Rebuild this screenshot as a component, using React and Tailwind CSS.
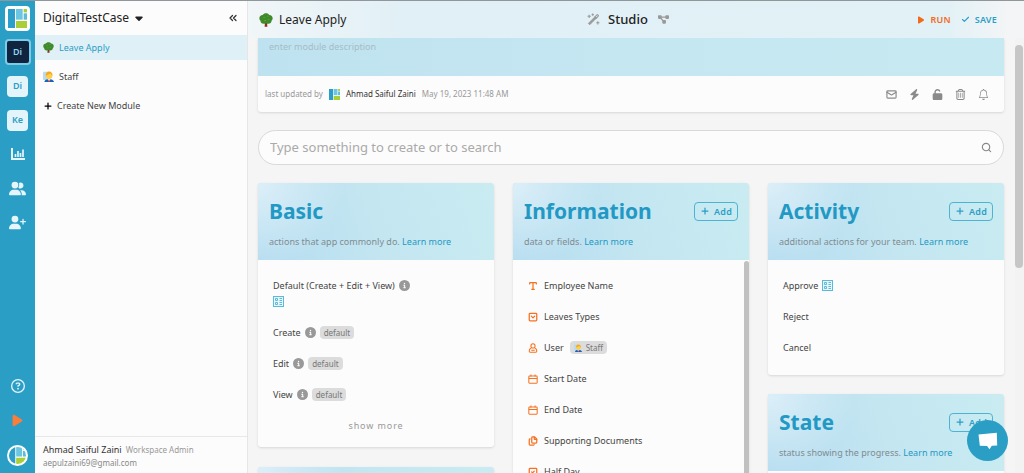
import React, { useState } from "react";
import {
  Calendar,
  Check,
  ChevronsLeft,
  Files,
  Mail,
  Plus,
  Search,
  SquareCheck,
  SquareChevronDown,
  Type,
} from "lucide-react";
import { BsBell } from "react-icons/bs";
import {
  FaBolt,
  FaCaretDown,
  FaCircleInfo,
  FaDiagramProject,
  FaPlay,
  FaRegCircleQuestion,
  FaRegTrashCan,
  FaUnlock,
  FaUserGroup,
  FaUserPlus,
} from "react-icons/fa6";

/* -------------------- Drawings -------------------- */
function Logo({ className }) {
  return (
    <svg viewBox="0 0 57 57" className={className} aria-hidden="true">
      <rect width="57" height="57" fill="#fff" />
      <rect width="21" height="57" fill="#2b9ec9" />
      <rect x="24" width="20" height="32" fill="#6cc6e2" />
      <rect x="47" width="10" height="10" fill="#a9ce37" />
      <rect x="47" y="13" width="10" height="19" fill="#5bbdd6" />
      <rect x="24" y="36" width="33" height="21" fill="#a9ce37" />
    </svg>
  );
}

function TreeIcon({ className }) {
  return (
    <svg viewBox="0 0 16 16" className={className} aria-hidden="true">
      <path d="M7 9h2l.6 6.6H6.4z" fill="#8b2f1c" />
      <path
        d="M8 .4c1.6 0 3 .8 3.800 1.900 2.300.3 3.800 1.700 3.800 3.700 0 1.300-.5 2.200-1.300 2.900.1 2.100-1.500 3.500-3.600 3.500-1 0-1.900-.3-2.700-.8-.8.5-1.700.8-2.700.8-2.100 0-3.700-1.400-3.600-3.500C.9 8.200.4 7.300.4 6c0-2 1.500-3.400 3.800-3.700C5 1.200 6.400.4 8 .4z"
        fill="#3f8a2b"
      />
      <path d="M5 4.500h2v1H5zM9 3h2v1H9zM10 7h2v1h-2zM6 8h2v1H6z" fill="#5fa63d" />
    </svg>
  );
}

function StaffIcon({ className }) {
  return (
    <svg viewBox="0 0 16 16" className={className} aria-hidden="true">
      <rect x="0" y="1" width="9" height="12" rx="1" fill="#b9dcec" />
      <path d="M2 16c.3-3 2.600-4.500 6.500-4.500S15.500 13 16 16z" fill="#1565c0" />
      <path d="M6.500 11.500h4.500l-2.200 3.800z" fill="#fff" />
      <path d="M8.200 12.500h1l.5 3.500h-2z" fill="#e53935" />
      <circle cx="8.800" cy="6.800" r="4.800" fill="#ffcf4a" />
      <path d="M4 7.500C3.600 3 6 .8 9 .8s5.200 2.400 4.700 6.500C12.800 6.500 11.800 5 11 3.800 9 5 6 5 4 7.500z" fill="#f6a623" />
    </svg>
  );
}

function FormIcon() {
  return (
    <svg viewBox="0 0 11 11" className="h-[11px] w-[11px]" fill="none" stroke="#5cb9d9" aria-label="form">
      <rect x=".5" y=".5" width="10" height="10" fill="#e6f5fa" />
      <path d="M2.500 2.500h2v2h-2zM2.500 6.500h2v2h-2zM6.500 2.500H9M6.500 4.500H9M6.500 6.500H9M6.500 8.500H9" />
    </svg>
  );
}

function ChartIcon() {
  return (
    <svg viewBox="0 0 14 12" className="h-3 w-[14px]" fill="none" stroke="currentColor" aria-hidden="true">
      <path d="M1 0v11h13" strokeWidth="2" />
      <path d="M4.500 9V6M7 9V3M9.500 9V5M12 9V1.500" strokeWidth="1.700" />
    </svg>
  );
}

function WandIcon({ className }) {
  return (
    <svg viewBox="0 0 24 24" className={className} fill="none" stroke="currentColor" aria-hidden="true">
      <path d="M2.500 19.200 14.700 7l2.500 2.500L5 21.700z" fill="currentColor" strokeWidth="1.500" strokeLinejoin="round" />
      <path d="m14.700 7 3.600-3.600c.5-.5 1.200-.5 1.700 0l.8.800c.5.5.5 1.200 0 1.700l-3.600 3.600z" strokeWidth="2" />
      <path d="M4 3v6M1 6h6M20 15v6M17 18h6M10.500 1v4M8.500 3h4" strokeWidth="2" />
    </svg>
  );
}

function UserIcon({ className }) {
  return (
    <svg viewBox="0 0 24 24" className={className} fill="none" stroke="currentColor" strokeWidth="2.500" aria-hidden="true">
      <circle cx="12" cy="7" r="5" />
      <path d="M7.500 12.500C4.500 13.500 3 15.500 3 18.500V20c0 1 .8 2 2 2h14c1.200 0 2-1 2-2v-1.500c0-3-1.500-5-4.500-6" />
      <path d="M8 17.500h8" />
    </svg>
  );
}

function CalendarIcon({ className }) {
  return (
    <svg viewBox="0 0 24 24" className={className} fill="none" stroke="currentColor" strokeWidth="2.500" aria-hidden="true">
      <rect x="2" y="5" width="20" height="17" rx="1.500" />
      <path d="M2 11h20M7 1v5M17 1v5" />
    </svg>
  );
}

function ChatIcon() {
  return (
    <svg viewBox="0 0 20 18" className="h-[18px] w-5" fill="#fff" aria-hidden="true">
      <path d="M.5 2.500 18.800.8l.4 12.700-5.400.3-2.300 3.400-2.400-3.200-7.300-.3z" />
    </svg>
  );
}

/* -------------------- Data -------------------- */
const workspaces = [
  { id: 1, label: "Di", active: true },
  { id: 2, label: "Di" },
  { id: 3, label: "Ke" },
];

const basics = ["Create", "Edit", "View"];

const fields = [
  { label: "Employee Name", Icon: Type },
  { label: "Leaves Types", Icon: SquareChevronDown },
  { label: "User", Icon: UserIcon, link: "Staff" },
  { label: "Start Date", Icon: CalendarIcon },
  { label: "End Date", Icon: CalendarIcon },
  { label: "Supporting Documents", Icon: Files },
  { label: "Half Day", Icon: SquareCheck },
];

/* -------------------- Layout parts -------------------- */
function Rail() {
  return (
    <nav className="flex w-[35px] shrink-0 flex-col items-center bg-[#2b9ec6] text-[#e6f5fb]">
      <a href="#home" aria-label="Home" className="flex h-[34px] items-center">
        <span className="rounded bg-white p-[3px]">
          <Logo className="h-[19px] w-[19px]" />
        </span>
      </a>
      {workspaces.map((w) => (
        <div key={w.id} className="flex h-[34px] items-center">
          <button
            className={
              w.active
                ? "h-[26px] w-[26px] rounded-sm border-2 border-[#7ccbe7] bg-[#10233f] text-[9px] font-semibold text-[#8fd6ef]"
                : "h-[21px] w-[21px] rounded-sm bg-[#e3f4fa] text-[9px] font-semibold text-[#2b9ec6]"
            }
          >
            {w.label}
          </button>
        </div>
      ))}
      <button aria-label="Reports" className="flex h-[34px] items-center">
        <ChartIcon />
      </button>
      <button aria-label="Teams" className="flex h-[34px] items-center">
        <FaUserGroup className="h-[17px] w-[17px]" />
      </button>
      <button aria-label="Invite" className="flex h-[34px] items-center">
        <FaUserPlus className="h-[17px] w-[17px]" />
      </button>
      <button aria-label="Help" className="mt-auto flex h-[35px] items-center">
        <FaRegCircleQuestion className="h-[14px] w-[14px]" />
      </button>
      <button aria-label="Run" className="flex h-[35px] items-center text-[#fb7d38]">
        <FaPlay className="h-[13px] w-[13px]" />
      </button>
      <button aria-label="Profile" className="flex h-[35px] items-center">
        <span className="overflow-hidden rounded-full bg-white p-[2px]">
          <Logo className="h-[17px] w-[17px] rounded-full" />
        </span>
      </button>
    </nav>
  );
}

function ModulePanel() {
  return (
    <aside className="flex w-[213px] shrink-0 flex-col border-r border-[#e6e6e6] bg-[#fcfcfc]">
      <div className="flex h-[34px] items-center justify-between px-2">
        <button className="flex items-center gap-1 text-xs text-[#222]">
          DigitalTestCase
          <FaCaretDown className="h-3 w-3" />
        </button>
        <button aria-label="Collapse">
          <ChevronsLeft className="h-3 w-3 text-[#333]" strokeWidth={2.5} />
        </button>
      </div>
      <div className="flex flex-col gap-1 text-[9px] text-[#444]">
        <a href="#leave" className="flex h-[25px] items-center gap-[5px] bg-[#dff0f6] pl-2 text-[#2b9ec6]">
          <TreeIcon className="h-[11px] w-[11px]" />
          Leave Apply
        </a>
        <a href="#staff" className="flex h-[25px] items-center gap-[5px] pl-2">
          <StaffIcon className="h-[11px] w-[11px]" />
          Staff
        </a>
        <button className="flex h-[25px] items-center gap-1 pl-2">
          <Plus className="h-[10px] w-[10px] text-black" strokeWidth={3} />
          Create New Module
        </button>
      </div>
      <div className="mt-auto border-t border-[#e8e8e8] px-2 pt-[6px] pb-1 leading-[13px]">
        <p className="flex items-baseline gap-1 text-[9px] text-[#333]">
          Ahmad Saiful Zaini
          <span className="text-[8px] text-[#999]">Workspace Admin</span>
        </p>
        <p className="text-[8px] text-[#888]">aepulzaini69@gmail.com</p>
      </div>
    </aside>
  );
}

function Card({ title, text, canAdd, children }) {
  return (
    <section className="overflow-hidden rounded-[3px] bg-[#fcfcfc] shadow">
      <header className="h-[77px] bg-[radial-gradient(circle_at_0%_0%,#dceff8_0%,transparent_35%),linear-gradient(70deg,#b4dcf0_0%,#c4e6f1_50%,#c9ebf1_100%)] px-[11px] pt-[14px]">
        {title && (
          <>
            <div className="flex h-7 items-center justify-between">
              <h2 className="text-[21px] font-bold text-[#2299c4]">{title}</h2>
              {canAdd && (
                <button className="flex h-[19px] items-center gap-1 rounded-sm border border-[#4db3d3] px-[5px] text-[9px] font-semibold tracking-wide text-[#2b9ec6]">
                  <Plus className="h-[10px] w-[10px]" strokeWidth={3} />
                  Add
                </button>
              )}
            </div>
            <p className="mt-[9px] text-[9px] leading-[15px] whitespace-nowrap text-[#7f8c92]">
              {text}{" "}
              <a href="#learn" className="text-[#2299c4]">
                Learn more
              </a>
            </p>
          </>
        )}
      </header>
      {children}
    </section>
  );
}

function Badge({ children }) {
  return (
    <span className="flex h-[13px] items-center gap-1 rounded-sm bg-[#dcdcdc] px-1 text-[8px] text-[#777]">
      {children}
    </span>
  );
}

export default function App() {
  const [query, setQuery] = useState("");

  return (
    <div className="flex h-screen overflow-hidden border-t border-[#8f979b] bg-[#f5f5f5] font-['Noto_Sans','Open_Sans',sans-serif] text-[#444]">
      <Rail />
      <ModulePanel />

      <main className="flex min-w-0 flex-1 flex-col">
        {/* ================= TOOLBAR ================= */}
        <header className="grid h-[37px] shrink-0 grid-cols-3 items-center bg-[linear-gradient(90deg,#f1f6f8_0%,#e1f0f6_20%,#e2f1f6_90%,#f3f5f6_98%)] pr-[27px] pl-[11px]">
          <div className="flex items-center gap-[6px] text-xs text-[#222]">
            <TreeIcon className="h-[14px] w-[14px]" />
            Leave Apply
          </div>
          <div className="flex items-center justify-center gap-2 text-[#999]">
            <WandIcon className="h-[13px] w-[13px]" />
            <h1 className="text-[13px] font-medium text-[#222]">Studio</h1>
            <FaDiagramProject className="ml-[2px] h-[11px] w-[11px]" />
          </div>
          <div className="flex justify-end gap-[10px] text-[9px] font-semibold tracking-wide">
            <button className="flex items-center gap-[5px] text-[#f26a1b]">
              <FaPlay className="h-2 w-2" />
              RUN
            </button>
            <button className="flex items-center gap-[5px] text-[#2b9ec6]">
              <Check className="h-[9px] w-[9px]" strokeWidth={3} />
              SAVE
            </button>
          </div>
        </header>

        <div className="flex min-h-0 flex-1">
          <div className="min-w-0 flex-1 overflow-y-auto pr-[11px] pl-[10px] [scrollbar-width:none]">
            {/* ================= MODULE INFO ================= */}
            <section className="rounded-b-[3px] bg-[#fcfcfc] shadow">
              <textarea
                aria-label="Module description"
                placeholder="enter module description"
                className="block h-[38px] w-full resize-none bg-[linear-gradient(90deg,#bfe2f0,#c5e7f2_50%,#c7e9f1)] px-[11px] py-px text-[9px] leading-[15px] outline-none placeholder:text-[#a5bcc6]"
              />
              <div className="flex h-9 items-center pr-[15px] pl-[7px] text-[8px] text-[#999]">
                <div className="flex flex-1 items-center gap-[6px]">
                  last updated by
                  <Logo className="h-[11px] w-[11px]" />
                  <span className="text-[#333]">Ahmad Saiful Zaini</span>
                  May 19, 2023 11:48 AM
                </div>
                <div className="flex items-center gap-3 text-[#8a8a8a]">
                  <button aria-label="Email"><Mail className="h-[11px] w-[11px]" strokeWidth={2.5} /></button>
                  <button aria-label="Automation"><FaBolt className="h-[11px] w-[11px]" /></button>
                  <button aria-label="Unlock"><FaUnlock className="h-[11px] w-[11px]" /></button>
                  <button aria-label="Delete"><FaRegTrashCan className="h-[11px] w-[11px]" /></button>
                  <button aria-label="Notifications"><BsBell className="h-[11px] w-[11px]" /></button>
                </div>
              </div>
            </section>

            {/* ================= SEARCH ================= */}
            <label className="my-[18px] flex h-[35px] items-center rounded-full border border-[#d9d9d9] bg-[#fcfcfc] px-[11px]">
              <input
                type="text"
                aria-label="Search"
                value={query}
                onChange={(e) => setQuery(e.target.value)}
                placeholder="Type something to create or to search"
                className="min-w-0 flex-1 bg-transparent text-[13px] outline-none placeholder:text-[#aaa]"
              />
              <Search className="h-[11px] w-[11px] text-[#888]" strokeWidth={2.5} />
            </label>

            {/* ================= CARDS ================= */}
            <div className="grid grid-cols-3 gap-[19px] text-[9px] leading-[15px]">
              <div className="flex flex-col gap-5">
                <Card title="Basic" text="actions that app commonly do.">
                  <div className="px-[15px] pt-[10px] pb-[13px]">
                    <div className="py-2">
                      <div className="flex items-center gap-1">
                        Default (Create + Edit + View)
                        <FaCircleInfo className="h-[11px] w-[11px] text-[#999]" />
                      </div>
                      <div className="flex h-4 items-center">
                        <FormIcon />
                      </div>
                    </div>
                    {basics.map((label) => (
                      <div key={label} className="flex h-[31px] items-center gap-1">
                        {label}
                        <FaCircleInfo className="h-[11px] w-[11px] text-[#999]" />
                        <Badge>default</Badge>
                      </div>
                    ))}
                    <button className="mt-[6px] block h-[18px] w-full tracking-widest text-[#999]">
                      show more
                    </button>
                  </div>
                </Card>
                <Card />
              </div>

              <Card title="Information" text="data or fields." canAdd>
                <div className="flex">
                  <ul className="flex-1 px-[15px] pt-[10px]">
                    {fields.map(({ label, Icon, link }) => (
                      <li key={label} className="flex h-[31px] items-center gap-[6px]">
                        <Icon className="h-[10px] w-[10px] text-[#f5711f]" strokeWidth={3} />
                        {label}
                        {link && (
                          <Badge>
                            <StaffIcon className="h-2 w-2" />
                            {link}
                          </Badge>
                        )}
                      </li>
                    ))}
                  </ul>
                  <div className="mt-px w-[5px] rounded-t-full bg-[#c1c1c1]" />
                </div>
              </Card>

              <div className="flex flex-col gap-[19px]">
                <Card title="Activity" text="additional actions for your team." canAdd>
                  <ul className="px-[15px] pt-[10px] pb-3">
                    <li className="flex h-[31px] items-center gap-1">
                      Approve
                      <FormIcon />
                    </li>
                    <li className="flex h-[31px] items-center">Reject</li>
                    <li className="flex h-[31px] items-center">Cancel</li>
                  </ul>
                </Card>
                <Card title="State" text="status showing the progress." canAdd>
                  <div className="h-10" />
                </Card>
              </div>
            </div>
          </div>
          <div className="flex w-[9px] shrink-0 bg-[#f3f3f3] pt-[7px] pr-px">
            <div className="h-[223px] w-full rounded-full bg-[#c6c6c6]" />
          </div>
        </div>
      </main>

      <button
        aria-label="Open chat"
        className="fixed right-4 bottom-3 flex h-[41px] w-[41px] items-center justify-center rounded-full bg-[#2b9ec6]"
      >
        <ChatIcon />
      </button>
    </div>
  );
}
